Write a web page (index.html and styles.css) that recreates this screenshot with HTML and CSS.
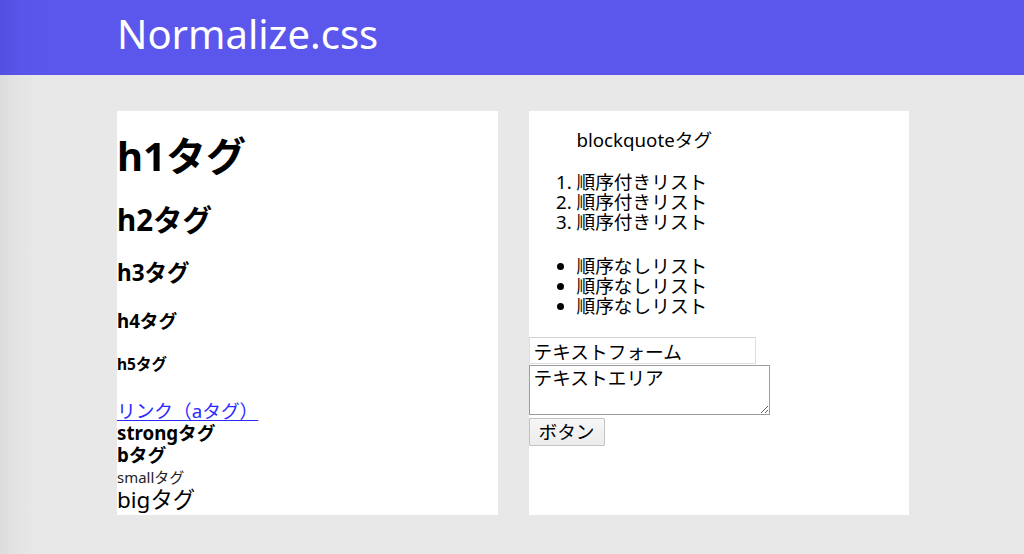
FILE: index.html
```html
<!DOCTYPE html>
<html lang="ja">
<head>
<meta charset="utf-8">
<title>Normalize.css</title>
<link rel="stylesheet" href="styles.css">
</head>
<body>
<header class="site-header">
  <h1 class="site-title">Normalize.css</h1>
</header>
<main class="cards">
  <section class="card card-left">
    <h1 class="t-h1">h1タグ</h1>
    <h2 class="t-h2">h2タグ</h2>
    <h3 class="t-h3">h3タグ</h3>
    <h4 class="t-h4">h4タグ</h4>
    <h5 class="t-h5">h5タグ</h5>
    <p class="inline-tags">
      <a class="t-link" href="#">リンク（aタグ）</a><br>
      <strong>strongタグ</strong><br>
      <b>bタグ</b><br>
      <small class="t-small">smallタグ</small><br>
      <big class="t-big">bigタグ</big>
    </p>
  </section>
  <section class="card card-right">
    <blockquote class="t-quote">blockquoteタグ</blockquote>
    <ol class="t-list t-ol">
      <li>順序付きリスト</li>
      <li>順序付きリスト</li>
      <li>順序付きリスト</li>
    </ol>
    <ul class="t-list t-ul">
      <li>順序なしリスト</li>
      <li>順序なしリスト</li>
      <li>順序なしリスト</li>
    </ul>
    <form class="t-form">
      <input class="t-input" type="text" value="テキストフォーム">
      <textarea class="t-textarea">テキストエリア</textarea>
      <button class="t-button" type="button">ボタン</button>
    </form>
  </section>
</main>
</body>
</html>
```
FILE: styles.css
```css
html, body {
  margin: 0;
  padding: 0;
}

body {
  min-height: 100vh;
  background: linear-gradient(to right, #dcdcdc 0, #e4e4e4 18px, #e8e8e8 40px);
  font-family: "Noto Sans", "Noto Sans CJK JP", sans-serif;
  font-size: 18.7px;
  line-height: 1.15;
  color: #000;
}

.site-header {
  height: 75px;
  background: linear-gradient(to right, #534ee0 0, #5955ea 20px, #5b57ec 45px);
}

.site-title {
  width: 792px;
  margin: 0 0 0 calc(50% - 395px);
  font-size: 40px;
  font-weight: 400;
  line-height: 68px;
  color: #fff;
}

.cards {
  width: 792px;
  margin: 36px 0 0 calc(50% - 395px);
  display: flex;
  gap: 31px;
}

.card {
  flex: 1 1 0;
  min-height: 404px;
  box-sizing: border-box;
  background: #fff;
  display: flow-root;
}

/* headings */
.t-h1, .t-h2, .t-h3, .t-h4, .t-h5 {
  font-weight: 700;
  line-height: 1.15;
  margin: 0;
}

.t-h1 { font-size: 40px; margin-top: 21.5px; }
.t-h2 { font-size: 29.5px; margin-top: 24.5px; }
.t-h3 { font-size: 22.5px; margin-top: 23.5px; }
.t-h4 { font-size: 18.7px; margin-top: 24px; }
.t-h5 { font-size: 15.5px; margin-top: 24.5px; }

.inline-tags {
  margin: 25.5px 0 0;
  line-height: 1.15;
}

.t-link {
  display: inline-block;
  margin-bottom: 1px;
  color: #2a2aff;
  text-decoration: underline;
  text-underline-offset: 2px;
}

.t-small {
  font-size: 80%;
  color: #222;
}

.t-big {
  font-size: 1.2em;
}

/* right card */
.card-right {
  line-height: 20px;
}

.t-quote {
  margin: 19px 0 0 48px;
}

.t-list {
  margin: 0;
  padding-left: 48px;
}

.t-ol { margin-top: 21.5px; }
.t-ul { margin-top: 24.5px; }

.t-form {
  margin-top: 20.8px;
  display: flex;
  flex-direction: column;
  align-items: flex-start;
}

.t-input,
.t-textarea,
.t-button {
  font-family: inherit;
  font-size: 18.7px;
  line-height: 1.15;
  color: #000;
  margin: 0;
  box-sizing: border-box;
}

.t-input {
  width: 227px;
  height: 27px;
  padding: 0 4px;
  border: 1px solid #dedede;
  border-top-color: #d2d2d2;
  background: #fff;
  outline: none;
}

.t-textarea {
  margin-top: 1px;
  width: 241px;
  height: 50px;
  padding: 1px 4px;
  border: 1px solid #9c9c9c;
  background: #fff;
  resize: both;
  overflow: auto;
}

.t-button {
  margin-top: 3px;
  width: 76px;
  height: 28px;
  padding: 0 6px;
  border: 1px solid #c2c2c2;
  background: linear-gradient(#f6f6f6, #ececec);
  border-radius: 1px;
}
```
